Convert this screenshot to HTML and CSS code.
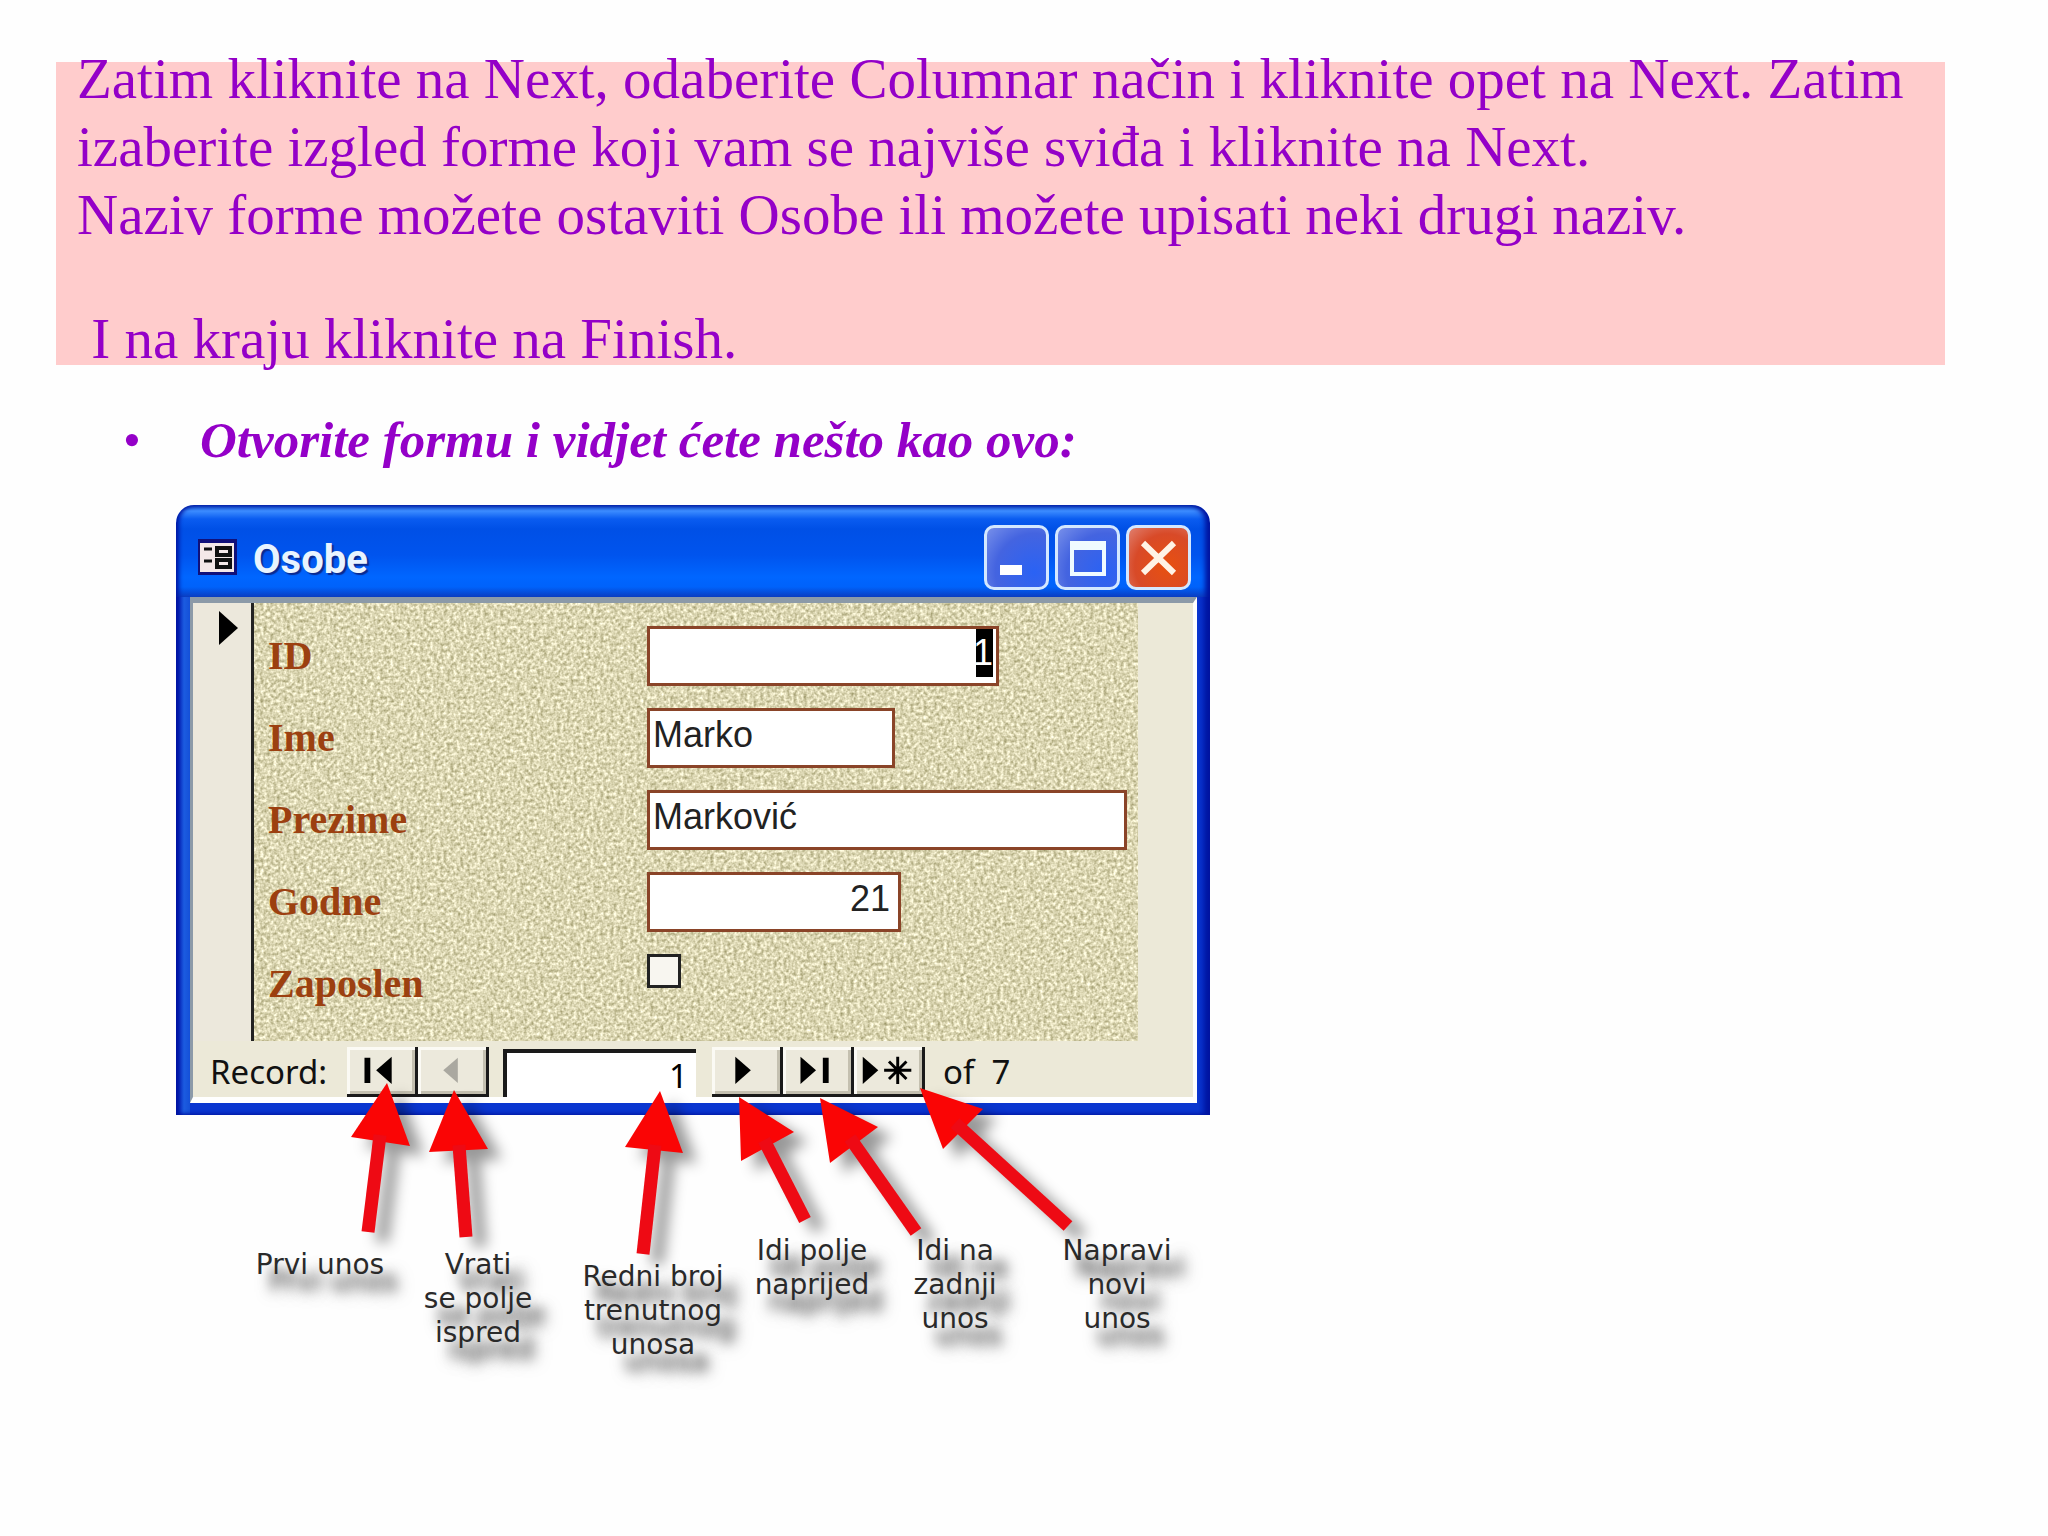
FILE: index.html
```html
<!DOCTYPE html>
<html lang="hr">
<head>
    <meta charset="UTF-8">
    <meta name="viewport" content="width=device-width, initial-scale=1.0">
    <title>Izrada forme - Osobe</title>
    <link rel="stylesheet" href="styles.css">
</head>
<body>
    <div class="intro">
        <p>Zatim kliknite na Next, odaberite Columnar način i kliknite opet na Next. Zatim izaberite izgled forme koji vam se najviše sviđa i kliknite na Next.<br>Naziv forme možete ostaviti Osobe ili možete upisati neki drugi naziv.</p>
        <p class="last">&nbsp;I na kraju kliknite na Finish.</p>
    </div>

    <ul class="steps">
        <li>Otvorite formu i vidjet ćete nešto kao ovo:</li>
    </ul>

    <div class="figure">
        <div class="window">
            <div class="title-bar">
                <svg class="form-icon" viewBox="0 0 39 36">
                    <rect width="39" height="36" fill="#10107a"/>
                    <rect x="2" y="4" width="34" height="29" fill="#f4e8e8"/>
                    <path d="M6 10h8M6 22h8" stroke="#111" stroke-width="3"/>
                    <path d="M19 9h13v7H19zM19 21h13v7H19z" fill="#f4e8e8" stroke="#111" stroke-width="4"/>
                </svg>
                <span class="title">Osobe</span>
                <button type="button" class="win-button" aria-label="Minimize">
                    <svg viewBox="0 0 65 65"><path d="M16 40h22v10H16z" fill="#fff"/></svg>
                </button>
                <button type="button" class="win-button" aria-label="Maximize">
                    <svg viewBox="0 0 65 65"><path d="M15 16h36v35H15zM19 25v22h28V25z" fill="#f0fbff" fill-rule="evenodd"/></svg>
                </button>
                <button type="button" class="win-button close" aria-label="Close">
                    <svg viewBox="0 0 65 65"><path d="M17 18l31 30M48 18L17 48" stroke="#fff3e6" stroke-width="6"/></svg>
                </button>
            </div>

            <form class="client">
                <div class="record">
                    <div class="selector">
                        <svg viewBox="0 0 19 34"><path d="M0 0l19 17L0 34z"/></svg>
                    </div>
                    <div class="sheet">
                        <svg class="texture" aria-hidden="true">
                            <filter id="sand" x="0" y="0" width="100%" height="100%" color-interpolation-filters="sRGB">
                                <feTurbulence type="fractalNoise" baseFrequency="0.3" numOctaves="2" seed="4"/>
                                <feColorMatrix values="0.6 0 0 0 0.56  0.6 0 0 0 0.54  0.7 0 0 0 0.35  0 0 0 0 1"/>
                            </filter>
                            <rect width="100%" height="100%" filter="url(#sand)"/>
                        </svg>
                        <div class="fields">
                            <label for="id">ID</label>
                            <input type="text" id="id" class="field number selected" value="1">
                            <label for="ime">Ime</label>
                            <input type="text" id="ime" class="field short" value="Marko">
                            <label for="prezime">Prezime</label>
                            <input type="text" id="prezime" class="field long" value="Marković">
                            <label for="godne">Godne</label>
                            <input type="text" id="godne" class="field number age" value="21">
                            <label for="zaposlen">Zaposlen</label>
                            <input type="checkbox" id="zaposlen" class="check">
                        </div>
                    </div>
                </div>

                <div class="navigation">
                    <label for="position">Record:</label>
                    <div class="nav-group">
                        <button type="button" aria-label="First">
                            <svg viewBox="0 0 70 48"><path d="M18 11h6v26h-6zM46 10v28L30 24z"/></svg>
                        </button>
                        <button type="button" aria-label="Previous" disabled>
                            <svg viewBox="0 0 70 48"><path d="M41 11v26L26 24z"/></svg>
                        </button>
                    </div>
                    <input type="text" id="position" class="position" value="1">
                    <div class="nav-group">
                        <button type="button" aria-label="Next">
                            <svg viewBox="0 0 70 48"><path d="M24 10v28l16-14z"/></svg>
                        </button>
                        <button type="button" aria-label="Last">
                            <svg viewBox="0 0 70 48"><path d="M18 10v28l16-14zM41 11h6v26h-6z"/></svg>
                        </button>
                        <button type="button" aria-label="New">
                            <svg viewBox="0 0 70 48"><path d="M9 10v28l16-14z"/><path d="M45 10v28M31 24h28M36 15l18 18M54 15L36 33" stroke="#000" stroke-width="3"/></svg>
                        </button>
                    </div>
                    <span class="count">of&nbsp; 7</span>
                </div>
            </form>
        </div>

        <ul class="captions">
            <li class="middle">Prvi unos</li>
            <li class="middle">Vrati<br>se polje<br>ispred</li>
            <li class="low">Redni broj<br>trenutnog<br>unosa</li>
            <li>Idi polje<br>naprijed</li>
            <li>Idi na<br>zadnji<br>unos</li>
            <li>Napravi<br>novi<br>unos</li>
        </ul>

        <!-- Strelice -->
        <svg class="arrows" viewBox="176 505 1034 860" aria-hidden="true">
            <path d="M387 1083L351 1137L410 1146z"/>
            <path class="shaft" d="M380 1135L368 1232"/>
            <path d="M454 1090L429 1152L488 1149z"/>
            <path class="shaft" d="M459 1145L466 1237"/>
            <path d="M660 1091L625 1147L683 1153z"/>
            <path class="shaft" d="M655 1145L643 1254"/>
            <path d="M739 1097L741 1161L794 1132z"/>
            <path class="shaft" d="M764 1140L805 1220"/>
            <path d="M820 1098L830 1163L878 1127z"/>
            <path class="shaft" d="M850 1138L916 1232"/>
            <path d="M920 1088L943 1149L983 1109z"/>
            <path class="shaft" d="M955 1123L1068 1226"/>
        </svg>
    </div>
</body>
</html>
```
FILE: styles.css
```css
body {
    font-family: "Liberation Serif", "Times New Roman", serif;
    margin: 0;
    background-color: #fefefe;
    color: #9400c8;
}
p, ul {
    margin: 0;
    padding: 0;
    list-style: none;
}
button, input {
    box-sizing: border-box;
    margin: 0;
    padding: 0;
}
/* Tekst na vrhu malo prelazi rub okvira */
.intro {
    display: flow-root;
    margin: 62px 103px 0 56px;
    padding: 0 21px;
    background-color: #ffcccc;
    font-size: 57px;
    line-height: 68px;
}
.intro p {
    margin-top: -17px;
}
.intro .last {
    margin-top: 56px;
    margin-bottom: -8px;
}
.steps {
    margin: 45px 0 35px 123px;
    font-size: 51px;
    font-weight: bold;
    font-style: italic;
    line-height: 60px;
}
.steps li {
    display: flex;
}
.steps li::before {
    content: "•";
    flex: 0 0 77px;
    font-weight: normal;
    font-style: normal;
}
.figure {
    position: relative;
    max-width: 1034px;
    margin-left: 176px;
}
/* Prozor */
.window {
    padding: 0 13px 12px 14px;
    border-radius: 18px 18px 0 0;
    background: linear-gradient(#1450c8 0, #3c8cff 6px, #0a5cf0 14px, #0050e6 24px, #0054ee 50px, #0066ff 72px, #0062fa 82px, #0a3cc0 92px, transparent 92px), linear-gradient(to right, #0018b4, #1c5ce0 8px, #1450d8 14px, #0a36d0 14px, #0a36d0 1022px, #0020b4);
    box-shadow: inset 3px 0 4px #0014a0, inset -5px 0 5px #0014a0;
}
.title-bar {
    display: flex;
    align-items: center;
    gap: 6px;
    height: 92px;
    padding: 12px 6px 0 8px;
    box-sizing: border-box;
}
.form-icon {
    width: 39px;
    height: 36px;
    margin-right: 10px;
}
.title {
    flex: 1;
    padding-top: 4px;
    font-family: Roboto, sans-serif;
    font-size: 40px;
    font-weight: bold;
    color: #e8f4ff;
    text-shadow: 2px 2px 1px #0a2a90;
}
.win-button {
    width: 65px;
    height: 65px;
    border: 3px solid #d4e8ff;
    border-radius: 10px;
    background: radial-gradient(circle at 80% 75%, #2a62f4, #4464e0 60%, #7890ea);
}
.win-button svg {
    display: block;
    margin: -3px;
}
.close {
    background: radial-gradient(circle at 65% 65%, #e85010, #d84a28 60%, #e08070);
}
.client {
    border: solid #8c9aa8;
    border-width: 6px 0 0 3px;
    border-bottom: 6px solid #fff;
    border-right: 4px solid #fff;
    background-color: #ece9d8;
    color: #111;
}
.record {
    display: flex;
}
.selector {
    flex: 0 0 58px;
    border-right: 3px solid #222;
    background-color: #ece8dc;
}
.selector svg {
    display: block;
    width: 19px;
    height: 34px;
    margin: 8px 0 0 26px;
}
.sheet {
    position: relative;
    flex: 1;
    margin-right: 55px;
}
.texture {
    position: absolute;
    width: 100%;
    height: 100%;
}
.fields {
    position: relative;
    display: grid;
    grid-template-columns: 379px 1fr;
    grid-auto-rows: 60px;
    row-gap: 22px;
    padding: 23px 11px 27px 14px;
}
.fields label {
    font-size: 40px;
    font-weight: bold;
    line-height: 60px;
    color: #9c4010;
}
.field {
    width: 352px;
    padding: 0 8px 6px 3px;
    border: 3px solid #8a4428;
    background-color: #fff;
    font-family: "Liberation Sans", Arial, sans-serif;
    font-size: 36px;
    color: #222;
}
.short {
    width: 248px;
}
.age {
    width: 254px;
}
.long {
    width: 100%;
}
.number {
    text-align: right;
}
.selected {
    background: linear-gradient(#000, #000) no-repeat right 3px top / 17px 48px #fff;
    padding-right: 3px;
    color: #fff;
}
.check {
    appearance: none;
    width: 34px;
    height: 34px;
    border: 3px solid #222;
    background-color: #f8f6f0;
}
/* Traka za kretanje po zapisima */
.navigation {
    display: flex;
    align-items: center;
    height: 56px;
    padding-left: 17px;
    font-family: "Noto Sans", sans-serif;
    font-size: 33px;
}
.navigation label {
    flex: 0 0 137px;
    padding-top: 4px;
}
.nav-group {
    display: flex;
}
.nav-group button {
    width: 71px;
    height: 50px;
    margin-top: 6px;
    border: solid #1a1a1a;
    border-width: 0 3px 3px 0;
    background-color: #ece9dc;
    box-shadow: inset 3px 3px #fbfaf4, inset -3px -3px #c4c0b0;
}
.nav-group button:disabled {
    fill: #aaa8a0;
}
.nav-group svg {
    display: block;
    width: 100%;
}
.position {
    width: 193px;
    height: 48px;
    margin: 8px 16px 0 14px;
    padding-right: 8px;
    border: solid #1a1a1a;
    border-width: 4px 0 0 4px;
    background-color: #fff;
    font: inherit;
    text-align: right;
}
.count {
    margin-left: 18px;
    padding-top: 4px;
}
.captions {
    display: grid;
    grid-template-columns: 156px 160px 190px 128px 158px 166px;
    margin: 119px 0 0 66px;
    padding-bottom: 60px;
    font-family: "DejaVu Sans", Verdana, sans-serif;
    font-size: 28px;
    line-height: 34px;
    text-align: center;
    color: #2a2a2a;
    text-shadow: 13px 16px 12px rgba(0, 0, 0, 0.5), 15px 18px 16px rgba(0, 0, 0, 0.5);
}
.middle {
    margin-top: 14px;
}
.low {
    margin-top: 26px;
}
.arrows {
    position: absolute;
    top: 0;
    left: 0;
    width: 100%;
    fill: #fa0505;
    filter: drop-shadow(14px 10px 7px rgba(0, 0, 0, 0.4));
    pointer-events: none;
}
.shaft {
    stroke: #ee0a14;
    stroke-width: 13;
}
```
